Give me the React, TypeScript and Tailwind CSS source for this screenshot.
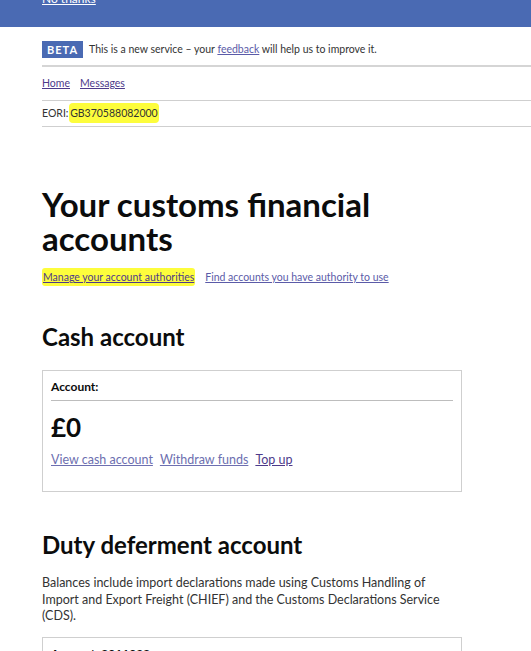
import React from 'react';

const App: React.FC = () => {
  return (
    <div className="min-h-[651px] w-[531px] overflow-hidden bg-white text-[#0b0c0c]" style={{ fontFamily: 'Lato, "Liberation Sans", sans-serif' }}>
      {/* cookie banner remains */}
      <div className="h-[27px] overflow-hidden bg-[#4a6ab3] pl-[42px]">
        <a className="block -mt-[8px] text-[12px] leading-[14px] text-white underline">No thanks</a>
      </div>

      <div className="pl-[42px]">
        {/* phase banner */}
        <div className="flex items-center gap-[6px] border-b-2 border-[#d5d5d5] pb-[7px] pt-[14px]">
          <span className="bg-[#4a6ab3] px-[5px] py-[2px] text-[11px] font-bold leading-[13px] tracking-[1px] text-white">BETA</span>
          <span className="text-[10.5px] text-[#333]">
            This is a new service – your <a className="text-[#5b5ba8] underline">feedback</a> will help us to improve it.
          </span>
        </div>

        {/* nav */}
        <div className="flex gap-[10px] border-b border-[#cfcfcf] py-[9px] text-[10.5px] leading-[15px]">
          <a className="text-[#4d3a8a] underline">Home</a>
          <a className="text-[#4d3a8a] underline">Messages</a>
        </div>

        {/* eori */}
        <div className="border-b border-[#cfcfcf] py-[5px] text-[10.5px] leading-[15px] text-[#333]">
          EORI: <span className="-ml-[2px] rounded-[4px] bg-[#fdfd3c] px-[1px] py-[4px]">GB370588082000</span>
        </div>

        <div className="w-[420px]">
          <h1 className="mt-[60px] text-[33px] font-bold leading-[34px]">
            Your customs financial accounts
          </h1>

          <div className="mt-[13px] flex gap-[10px] text-[10.5px] leading-[14px]">
            <a className="rounded-[3px] bg-[#fdfd3c] px-[1px] py-[2px] text-[#4d3a8a] underline">Manage your account authorities</a>
            <a className="py-[2px] text-[#5b5ba8] underline">Find accounts you have authority to use</a>
          </div>

          <h2 className="mt-[37px] text-[24px] font-bold leading-[28px]">Cash account</h2>

          <div className="mt-[19px] border border-[#cfcfcf] px-[8px] pb-[23px] pt-[8px]">
            <div className="border-b border-[#bdbdbd] pb-[5px] text-[12px] font-bold leading-[16px]">Account:</div>
            <div className="mt-[10px] text-[26px] font-bold leading-[32px]">£0</div>
            <div className="mt-[9px] flex gap-[7px] text-[12.5px] leading-[16px]">
              <a className="text-[#6d6fb0] underline">View cash account </a>
              <a className="text-[#6d6fb0] underline">Withdraw funds </a>
              <a className="text-[#4d3a8a] underline">Top up</a>
            </div>
          </div>

          <h2 className="mt-[39px] text-[24px] font-bold leading-[28px]">Duty deferment account</h2>

          <p className="mt-[16px] w-[400px] text-[12.5px] leading-[16.5px] text-[#333]">
            Balances include import declarations made using Customs Handling of Import and Export Freight (CHIEF) and the Customs Declarations Service (CDS).
          </p>

          <div className="mt-[12px] border border-[#cfcfcf] px-[8px] pb-[23px] pt-[8px]">
            <div className="text-[12px] font-bold leading-[16px]">Account: 8011023</div>
          </div>
        </div>
      </div>
    </div>
  );
};

export default App;
